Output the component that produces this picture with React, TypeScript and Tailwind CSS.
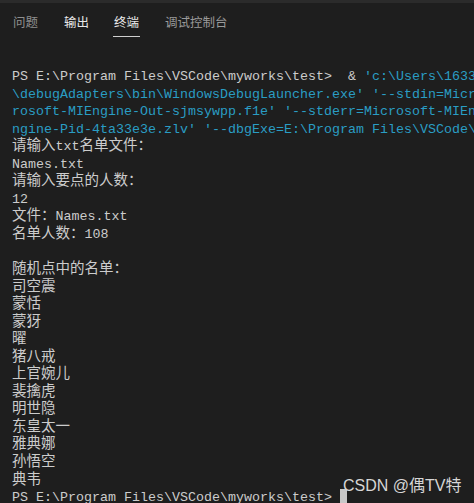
import React from "react";

const mono = { fontFamily: '"Liberation Mono", "Noto Sans CJK SC", monospace' };

// CJK runs get a bit larger, like the terminal's fallback font
function seg(s: string) {
  return s.split(/([\u3000-\u9fff\uff00-\uffef]+)/).map((p, i) =>
    i % 2 ? (
      <span key={i} className="text-[14.5px] leading-[11px]" style={{ fontFamily: '"Noto Sans CJK SC", sans-serif' }}>
        {p}
      </span>
    ) : (
      p
    )
  );
}

const output = [
  "请输入txt名单文件：",
  "Names.txt",
  "请输入要点的人数：",
  "12",
  "文件：Names.txt",
  "名单人数：108",
  "",
  "随机点中的名单：",
  "司空震",
  "蒙恬",
  "蒙犽",
  "曜",
  "猪八戒",
  "上官婉儿",
  "裴擒虎",
  "明世隐",
  "东皇太一",
  "雅典娜",
  "孙悟空",
  "典韦",
];

function Line({ children }: { children?: React.ReactNode }) {
  return <div className="h-[17.55px] leading-[17.55px] whitespace-pre">{children}</div>;
}

export default function App() {
  return (
    <main className="relative w-[474px] h-[503px] overflow-hidden bg-[#1e1e1e]">
      <div className="h-[3px] bg-[#2b2b2b]" />
      <div
        className="flex items-start h-[40px] pt-[10px] pl-[13px] text-[12.5px]"
        style={{ fontFamily: '"Noto Sans CJK SC", sans-serif' }}
      >
        <span className="leading-[18px] text-[#8f8f8f]">问题</span>
        <span className="leading-[18px] ml-[26px] text-[#e8e8e8]">输出</span>
        <span className="leading-[18px] ml-[24px] pb-[5px] px-[1px] border-b border-[#cfcfcf] text-[#e8e8e8]">终端</span>
        <span className="leading-[18px] ml-[25px] text-[#9a9a9a]">调试控制台</span>
      </div>
      <div className="pt-[25px] pl-[12px] text-[13.33px] text-[#cccccc]" style={mono}>
        <Line>
          PS E:\Program Files\VSCode\myworks\test{">"}  &amp;{" "}
          <span className="text-[#2a9dc4]">'c:\Users\16337\.vscode\extensions</span>
        </Line>
        <Line>
          <span className="text-[#2a9dc4]">\debugAdapters\bin\WindowsDebugLauncher.exe' '--stdin=Microsoft</span>
        </Line>
        <Line>
          <span className="text-[#2a9dc4]">rosoft-MIEngine-Out-sjmsywpp.f1e' '--stderr=Microsoft-MIEngine</span>
        </Line>
        <Line>
          <span className="text-[#2a9dc4]">ngine-Pid-4ta33e3e.zlv' '--dbgExe=E:\Program Files\VSCode\mingw</span>
        </Line>
        {output.map((t, i) => (
          <Line key={i}>{seg(t)}</Line>
        ))}
        <Line>
          PS E:\Program Files\VSCode\myworks\test{">"}{" "}
          <span className="inline-block w-[7px] h-[16px] align-[-4px] bg-[#c8c8c8]" />
        </Line>
      </div>
      <div
        className="absolute left-[343px] top-[476px] text-[16px] leading-[20px] text-[#d6d6d6]"
        style={{ fontFamily: '"Liberation Sans", "Noto Sans CJK SC", sans-serif' }}
      >
        CSDN @偶TV特
      </div>
    </main>
  );
}
